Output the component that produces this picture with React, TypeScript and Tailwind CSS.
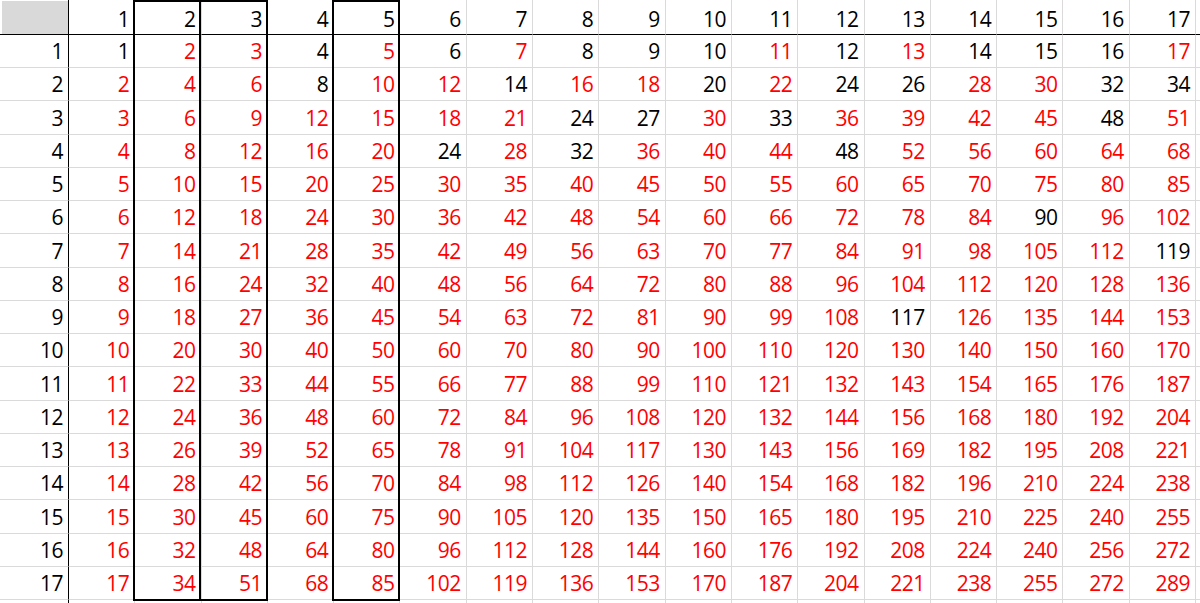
import React from "react";

const N = 17;

// cells that stay black inside the table body (row -> columns)
const blackCells: Record<number, number[]> = {
  1: [1, 4, 6, 8, 9, 10, 12, 14, 15, 16],
  2: [4, 7, 10, 12, 13, 16, 17],
  3: [8, 9, 11, 16],
  4: [6, 8, 12],
  6: [15],
  7: [17],
  9: [13],
};

const nums = Array.from({ length: N }, (_, i) => i + 1);

function Cell({
  children,
  className = "",
}: {
  children?: React.ReactNode;
  className?: string;
}) {
  return (
    <div
      className={`flex items-end justify-end pr-[5px] leading-none tracking-[-0.5px] ${className}`}
    >
      {children}
    </div>
  );
}

export default function App() {
  return (
    <div
      className="relative h-[603px] w-[1200px] overflow-hidden bg-white text-[21px] text-black"
      style={{ fontFamily: '"Open Sans", "Liberation Sans", sans-serif' }}
    >
      <div className="grid grid-cols-[69px_repeat(17,66.3px)_66px] grid-rows-[35px_repeat(17,33.24px)_33px]">
        {/* header row */}
        <div className="border-b border-r border-black pl-[2px] pt-[1px]">
          <div className="h-full w-full bg-[#d9d9d9]" />
        </div>
        {nums.map((c) => (
          <Cell key={`h${c}`} className="border-b border-r border-b-black border-r-[#dadada] pb-[4px]">
            {c}
          </Cell>
        ))}
        <div className="border-b border-black" />

        {/* body rows */}
        {nums.map((r) => (
          <React.Fragment key={`r${r}`}>
            <Cell className="border-b border-r border-b-[#dadada] border-r-black pb-[5px]">{r}</Cell>
            {nums.map((c) => (
              <Cell
                key={`c${r}-${c}`}
                className={`border-b border-r border-[#dadada] pb-[5px] ${
                  blackCells[r]?.includes(c) ? "text-black" : "text-[#ff0000]"
                }`}
              >
                {r * c}
              </Cell>
            ))}
            <div className="border-b border-[#dadada]" />
          </React.Fragment>
        ))}

        {/* partly visible row below the table */}
        <div className="border-r border-black" />
        {nums.map((c) => (
          <div key={`e${c}`} className="border-r border-[#dadada]" />
        ))}
        <div />
      </div>

      {/* selection outlines over columns 2-3 and 5 */}
      <div className="pointer-events-none absolute left-[133px] top-0 h-[601px] w-[135px] border-2 border-black" />
      <div className="pointer-events-none absolute left-[199px] top-0 h-[601px] w-[2px] bg-black" />
      <div className="pointer-events-none absolute left-[332px] top-0 h-[601px] w-[68px] border-2 border-black" />
    </div>
  );
}
